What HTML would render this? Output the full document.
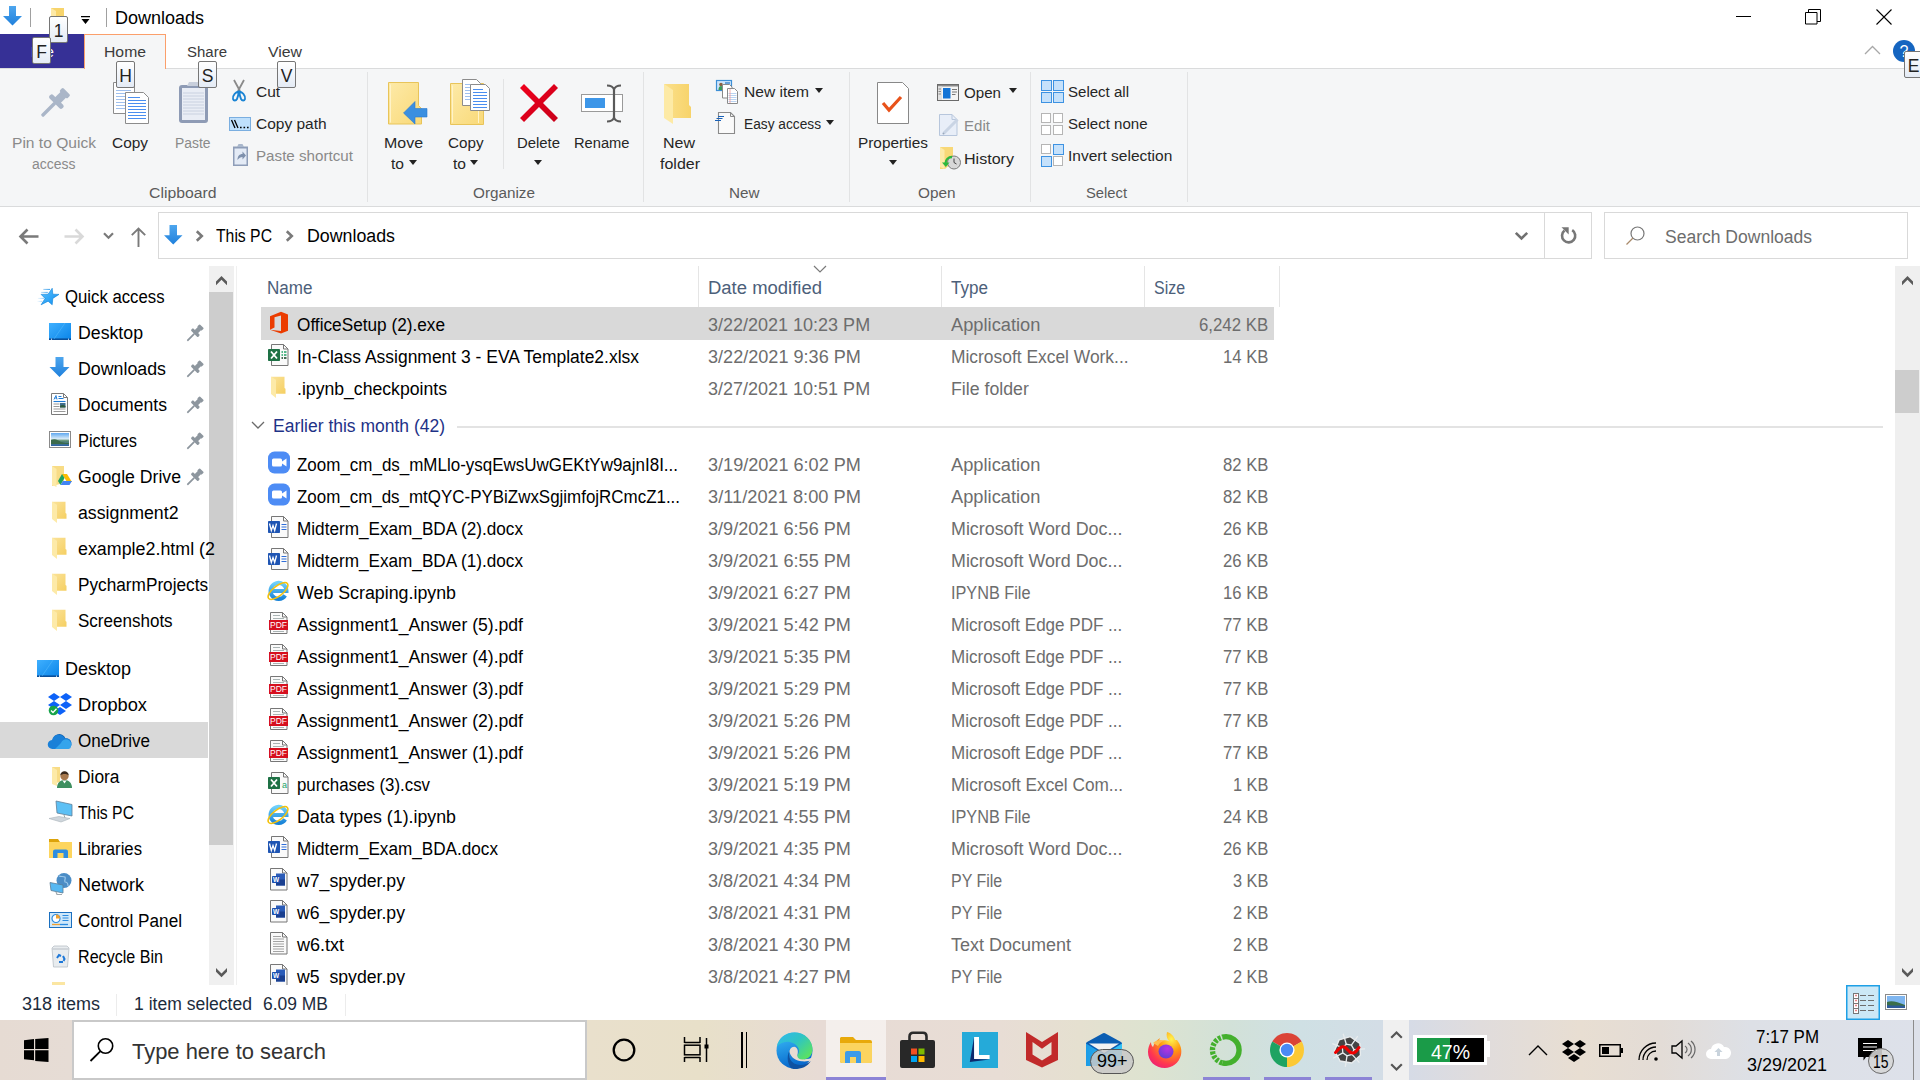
<!DOCTYPE html>
<html><head><meta charset="utf-8"><title>Downloads</title>
<style>
html,body{margin:0;padding:0;width:1920px;height:1080px;overflow:hidden;background:#fff;}
body{position:relative;font-family:"Liberation Sans",sans-serif;}
.t{position:absolute;white-space:nowrap;transform-origin:0 0;}
.r{position:absolute;}
svg.r{overflow:visible}
</style></head><body>
<div class="r" style="left:0px;top:0px;width:1920px;height:34px;background:#fff;"></div>
<svg class="r" style="left:3px;top:6px" width="19" height="20" viewBox="0 0 19 20"><defs><linearGradient id="dlc" x1="0" y1="0" x2="0" y2="1"><stop offset="0" stop-color="#4ea6ee"/><stop offset="1" stop-color="#1f80dc"/></linearGradient></defs><path d="M6 0h7v10h6l-9.5 9.5L0 10h6z" fill="url(#dlc)"/></svg>
<div class="r" style="left:30px;top:8px;width:1px;height:19px;background:#a0a0a0;"></div>
<svg class="r" style="left:51px;top:8px" width="14" height="12" viewBox="0 0 14 12"><path d="M0 0h13v12H0z" fill="#f7d46c"/><path d="M0 0l5 3v9H0z" fill="#fde9a6"/></svg>
<svg class="r" style="left:81px;top:16px" width="10" height="9" viewBox="0 0 10 9"><path d="M0 0h9v1.3H0z M0.5 3h8L4.5 8z" fill="#000"/></svg>
<div class="r" style="left:106px;top:8px;width:1px;height:19px;background:#a0a0a0;"></div>
<div class="t " style="left:115px;top:8.76px;font-size:18px;line-height:18px;color:#000;">Downloads</div>
<div class="r" style="left:1736px;top:16px;width:15px;height:1px;background:#000;"></div>
<svg class="r" style="left:1805px;top:9px" width="16" height="16" viewBox="0 0 16 16"><path d="M0.5 3.5h11.5v11.5H0.5z M3.5 3.5V0.5h12v12h-3.5" fill="none" stroke="#000" stroke-width="1"/></svg>
<svg class="r" style="left:1876px;top:9px" width="16" height="16" viewBox="0 0 16 16"><path d="M0.5 0.5L15.5 15.5M15.5 0.5L0.5 15.5" stroke="#000" stroke-width="1.1"/></svg>
<div class="r" style="left:0px;top:34px;width:84px;height:34px;background:#363096;"></div>
<div class="t " style="left:31px;top:43.88px;font-size:15.5px;line-height:15.5px;color:#fff;transform:scaleX(0.9148);">File</div>
<div class="r" style="left:84px;top:34px;width:82px;height:35px;background:#f5f6f7;border:1px solid #fb9f6b;border-bottom:none;box-sizing:border-box;"></div>
<div class="t " style="left:104px;top:43.88px;font-size:15.5px;line-height:15.5px;color:#3b3b3b;transform:scaleX(1.0158);">Home</div>
<div class="t " style="left:187px;top:43.88px;font-size:15.5px;line-height:15.5px;color:#3b3b3b;transform:scaleX(0.9671);">Share</div>
<div class="t " style="left:268px;top:43.88px;font-size:15.5px;line-height:15.5px;color:#3b3b3b;transform:scaleX(1.0205);">View</div>
<div class="r" style="left:166px;top:68px;width:1754px;height:1px;background:#dadbdc;"></div>
<div class="r" style="left:0px;top:68px;width:84px;height:1px;background:#dadbdc;"></div>
<svg class="r" style="left:1864px;top:45px" width="17" height="10" viewBox="0 0 17 10"><path d="M1 9l7.5-7.5L16 9" fill="none" stroke="#a8a8a8" stroke-width="1.3"/></svg>
<svg class="r" style="left:1893px;top:40px" width="22" height="22" viewBox="0 0 22 22"><circle cx="11" cy="11" r="11" fill="#1565c0"/><text x="11" y="17" font-family="Liberation Sans" font-size="16" fill="#fff" text-anchor="middle">?</text></svg>
<div class="r" style="left:0px;top:69px;width:1920px;height:137px;background:#f5f6f7;"></div>
<div class="r" style="left:0px;top:206px;width:1920px;height:1px;background:#dadbdc;"></div>
<div class="r" style="left:367px;top:72px;width:1px;height:130px;background:#e2e3e4;"></div>
<div class="r" style="left:643px;top:72px;width:1px;height:130px;background:#e2e3e4;"></div>
<div class="r" style="left:849px;top:72px;width:1px;height:130px;background:#e2e3e4;"></div>
<div class="r" style="left:1030px;top:72px;width:1px;height:130px;background:#e2e3e4;"></div>
<div class="r" style="left:1187px;top:72px;width:1px;height:130px;background:#e2e3e4;"></div>
<div class="r" style="left:503px;top:79px;width:1px;height:90px;background:#e2e3e4;"></div>
<svg class="r" style="left:39px;top:88px" width="31" height="31" viewBox="0 0 31 31"><g transform="translate(25.5 5.5) rotate(45)"><rect x="-5.5" y="-3" width="11" height="5" rx="1.5" fill="#aab6c8"/><rect x="-4" y="1" width="8" height="9" fill="#aab6c8"/><rect x="-9" y="9" width="18" height="5" rx="2" fill="#aab6c8"/><rect x="-1.7" y="13" width="3.4" height="19" rx="1.2" fill="#aab6c8"/></g></svg>
<div class="t " style="left:12px;top:134.88px;font-size:15.5px;line-height:15.5px;color:#8a8a8a;transform:scaleX(1.0052);">Pin to Quick</div>
<div class="t " style="left:32px;top:155.88px;font-size:15.5px;line-height:15.5px;color:#8a8a8a;transform:scaleX(0.9017);">access</div>
<svg class="r" style="left:113px;top:82px" width="36" height="42" viewBox="0 0 36 42"><path d="M0.5 0.5h17l4 4v27H0.5z" fill="#fff" stroke="#8c8c8c"/><g stroke="#9fc0ee" stroke-width="1"><path d="M3 8.5h15M3 11.5h15M3 14.5h15M3 17.5h15M3 20.5h15M3 23.5h15M3 26.5h15"/></g><path d="M12.5 10.5h18l5 5v26h-23z" fill="#fff" stroke="#8c8c8c"/><g stroke="#4a8ef0" stroke-width="1"><path d="M15 15.5h12M15 18.5h18M15 21.5h18M15 24.5h18M15 27.5h18M15 30.5h18M15 33.5h18M15 36.5h18"/></g></svg>
<div class="t " style="left:112px;top:134.88px;font-size:15.5px;line-height:15.5px;color:#262626;transform:scaleX(0.9949);">Copy</div>
<svg class="r" style="left:178px;top:81px" width="31" height="43" viewBox="0 0 31 43"><rect x="1" y="4" width="29" height="38" rx="3" fill="#8e9bb5"/><rect x="4" y="7" width="23" height="32" fill="#e9edf5"/><g stroke="#c9d1e0" stroke-width="1"><path d="M5 12h21M5 15h21M5 18h21M5 21h21M5 24h21M5 27h21M5 30h21M5 33h21"/></g><path d="M9 5h13l-2-4h-9z" fill="#c8cfdc"/></svg>
<div class="t " style="left:174.5px;top:134.88px;font-size:15.5px;line-height:15.5px;color:#8a8a8a;transform:scaleX(0.8957);">Paste</div>
<svg class="r" style="left:229px;top:79px" width="20" height="24" viewBox="0 0 20 24"><path d="M5 1l6 11M15 1L9 12" stroke="#8a8a8a" stroke-width="1.8" fill="none"/><path d="M9.5 12.5C7 13 3.5 16 4 20c0.5 2 3 2 4 0 1-2 1.5-5 1.5-7.5zM10.5 12.5c2.5.5 6 3.5 5.5 7.5-.5 2-3 2-4 0-1-2-1.5-5-1.5-7.5z" fill="none" stroke="#1a84d4" stroke-width="1.8"/></svg>
<div class="t " style="left:256px;top:83.88px;font-size:15.5px;line-height:15.5px;color:#262626;">Cut</div>
<svg class="r" style="left:229px;top:117px" width="22" height="14" viewBox="0 0 22 14"><rect x="0.5" y="0.5" width="21" height="13" fill="#bfe0fc" stroke="#7aaee0"/><path d="M2.5 3l3.5 8M5.5 3l3.5 8" stroke="#000" stroke-width="1.3"/><path d="M11 10.5h1.6M14.5 10.5h1.6M18 10.5h1.6" stroke="#000" stroke-width="1.6"/></svg>
<div class="t " style="left:256px;top:115.88px;font-size:15.5px;line-height:15.5px;color:#262626;">Copy path</div>
<svg class="r" style="left:232px;top:143px" width="17" height="24" viewBox="0 0 17 24"><rect x="1" y="3.5" width="15" height="19.5" fill="#8e9db8"/><rect x="2.5" y="5.5" width="12" height="16" fill="#e4ebf6"/><path d="M5 4h7l-1.5-3h-4z" fill="#a9b7cc"/><path d="M5.5 17c0-4 2-6 5-6v-2.5l3.5 4-3.5 4v-2.5c-2 0-3.5 1-5 3z" fill="#7f91ad"/></svg>
<div class="t " style="left:256px;top:147.88px;font-size:15.5px;line-height:15.5px;color:#8a8a8a;transform:scaleX(0.9790);">Paste shortcut</div>
<div class="t " style="left:149px;top:184.88px;font-size:15.5px;line-height:15.5px;color:#5b5b5b;transform:scaleX(1.0174);">Clipboard</div>
<svg class="r" style="left:388px;top:82px" width="40" height="44" viewBox="0 0 40 44"><defs><linearGradient id="fg1" x1="0" y1="0" x2="1" y2="1"><stop offset="0" stop-color="#fdeaa8"/><stop offset="1" stop-color="#f9d978"/></linearGradient></defs><path d="M0.5 0.5h30v23l3 3v15.5h-33z" fill="url(#fg1)" stroke="#e8c45a"/><path d="M2.5 2.5v38" stroke="#fff3c8" stroke-width="1"/><path d="M15.5 31l11.5-11.5v7h12v8.5h-12v7z" fill="#3b8fe0" stroke="#2a7ad0" stroke-width="0.6"/></svg>
<div class="t " style="left:384px;top:134.88px;font-size:15.5px;line-height:15.5px;color:#262626;transform:scaleX(1.0290);">Move</div>
<div class="t " style="left:391px;top:155.88px;font-size:15.5px;line-height:15.5px;color:#262626;transform:scaleX(1.0057);">to</div>
<svg class="r" style="left:409px;top:160px" width="8" height="5" viewBox="0 0 8 5"><path d="M0 0h8L4 5z" fill="#222"/></svg>
<svg class="r" style="left:450px;top:79px" width="41" height="46" viewBox="0 0 41 46"><defs><linearGradient id="fg2" x1="0" y1="0" x2="1" y2="1"><stop offset="0" stop-color="#fdeaa8"/><stop offset="1" stop-color="#f9d978"/></linearGradient></defs><path d="M0.5 4.5h33v41h-33z" fill="url(#fg2)" stroke="#e8c45a"/><path d="M2.5 6.5v37M28.5 30v14" stroke="#fff3c8" stroke-width="1"/><path d="M12.5 0.5h14l4 4v22h-18z" fill="#fff" stroke="#8c8c8c"/><g stroke="#9fc0ee"><path d="M15 5.5h10M15 8.5h13M15 11.5h13M15 14.5h13M15 17.5h13M15 20.5h13"/></g><path d="M20.5 5.5h15l4 4v22h-19z" fill="#fff" stroke="#8c8c8c"/><g stroke="#4a8ef0"><path d="M23 10.5h10M23 13.5h14M23 16.5h14M23 19.5h14M23 22.5h14M23 25.5h14M23 28.5h14"/></g></svg>
<div class="t " style="left:447.5px;top:134.88px;font-size:15.5px;line-height:15.5px;color:#262626;transform:scaleX(0.9811);">Copy</div>
<div class="t " style="left:453px;top:155.88px;font-size:15.5px;line-height:15.5px;color:#262626;transform:scaleX(1.0057);">to</div>
<svg class="r" style="left:470px;top:160px" width="8" height="5" viewBox="0 0 8 5"><path d="M0 0h8L4 5z" fill="#222"/></svg>
<svg class="r" style="left:520px;top:84px" width="38" height="38" viewBox="0 0 38 38"><defs><linearGradient id="dg" x1="0" y1="0" x2="1" y2="1"><stop offset="0" stop-color="#f0001c"/><stop offset="1" stop-color="#c8001a"/></linearGradient></defs><path d="M4 0L19 15 34 0l4 4-15 15 15 15-4 4-15-15L4 38 0 34l15-15L0 4z" fill="url(#dg)"/></svg>
<div class="t " style="left:517px;top:134.88px;font-size:15.5px;line-height:15.5px;color:#262626;transform:scaleX(0.9597);">Delete</div>
<svg class="r" style="left:534px;top:160px" width="8" height="5" viewBox="0 0 8 5"><path d="M0 0h8L4 5z" fill="#222"/></svg>
<svg class="r" style="left:581px;top:84px" width="42" height="39" viewBox="0 0 42 39"><rect x="0.5" y="10.5" width="41" height="17" fill="#fff" stroke="#9a9a9a"/><rect x="4" y="14" width="20" height="10" fill="#3d96e8"/><path d="M26 1.5c3 0 6 1 7 4v28c-1 3-4 4-7 4M40 1.5c-3 0-6 1-7 4v28c1 3 4 4 7 4" fill="none" stroke="#5a5a5a" stroke-width="2.2"/></svg>
<div class="t " style="left:574px;top:134.88px;font-size:15.5px;line-height:15.5px;color:#262626;transform:scaleX(0.9473);">Rename</div>
<div class="t " style="left:472.5px;top:184.88px;font-size:15.5px;line-height:15.5px;color:#5b5b5b;transform:scaleX(0.9858);">Organize</div>
<svg class="r" style="left:663px;top:84px" width="29" height="41" viewBox="0 0 29 41"><defs><linearGradient id="nf" x1="0" y1="0" x2="1" y2="0"><stop offset="0" stop-color="#fbe08c"/><stop offset="1" stop-color="#f7d36a"/></linearGradient></defs><path d="M1 0h25v21l2 2v11H10z" fill="url(#nf)"/><path d="M1 0l9 6v34L1 34z" fill="#fdeaa6"/></svg>
<div class="t " style="left:663px;top:134.88px;font-size:15.5px;line-height:15.5px;color:#262626;transform:scaleX(1.0320);">New</div>
<div class="t " style="left:659.5px;top:155.88px;font-size:15.5px;line-height:15.5px;color:#262626;transform:scaleX(1.0316);">folder</div>
<svg class="r" style="left:715px;top:79px" width="24" height="24" viewBox="0 0 24 24"><rect x="1.5" y="1.5" width="15" height="10" fill="#cfe6fb" stroke="#3d8fd6" stroke-width="1.2"/><circle cx="6" cy="5.5" r="1.8" fill="#8a6040"/><path d="M3.5 11c0-3 1-4 2.5-4s2.5 1 2.5 4z" fill="#3a9a5a"/><path d="M10 4h5" stroke="#1d6fc0" stroke-width="1.2"/><path d="M7.5 5.5h7l2.5 2.5v11h-9.5z" fill="#fff" stroke="#8a8a8a"/><path d="M12.5 9.5h7l3 3v12h-10z" fill="#fff" stroke="#8a8a8a"/><path d="M13.5 14.5h8M13.5 16.5h8M13.5 18.5h8M13.5 20.5h8M13.5 22.5h8" stroke="#a8c8ee" stroke-width="0.8"/><path d="M15 10v14" stroke="#f09a9a" stroke-width="0.8"/></svg>
<div class="t " style="left:744px;top:83.88px;font-size:15.5px;line-height:15.5px;color:#262626;transform:scaleX(1.0063);">New item</div>
<svg class="r" style="left:815px;top:88px" width="8" height="5" viewBox="0 0 8 5"><path d="M0 0h8L4 5z" fill="#222"/></svg>
<svg class="r" style="left:714px;top:111px" width="22" height="24" viewBox="0 0 22 24"><path d="M4.5 1.5h12l4 4v17h-16z" fill="#fafafa" stroke="#8a8a8a" stroke-width="1.1"/><path d="M16.5 1.5v4h4" fill="none" stroke="#8a8a8a"/><path d="M4 5.5h6M2.5 7.5h6M1 9.5h6" stroke="#1a62b8" stroke-width="1.1"/></svg>
<div class="t " style="left:744px;top:115.88px;font-size:15.5px;line-height:15.5px;color:#262626;transform:scaleX(0.8850);">Easy access</div>
<svg class="r" style="left:826px;top:120px" width="8" height="5" viewBox="0 0 8 5"><path d="M0 0h8L4 5z" fill="#222"/></svg>
<div class="t " style="left:729px;top:184.88px;font-size:15.5px;line-height:15.5px;color:#5b5b5b;transform:scaleX(0.9836);">New</div>
<svg class="r" style="left:877px;top:82px" width="33" height="43" viewBox="0 0 33 43"><path d="M0.5 0.5h25l6 6v35h-31z" fill="#fff" stroke="#888"/><path d="M6 21l6 7 12-13" fill="none" stroke="#e8521a" stroke-width="3.2"/></svg>
<div class="t " style="left:857.5px;top:134.88px;font-size:15.5px;line-height:15.5px;color:#262626;transform:scaleX(0.9909);">Properties</div>
<svg class="r" style="left:889px;top:160px" width="8" height="5" viewBox="0 0 8 5"><path d="M0 0h8L4 5z" fill="#222"/></svg>
<svg class="r" style="left:937px;top:84px" width="22" height="17" viewBox="0 0 22 17"><rect x="0.5" y="0.5" width="21" height="16" fill="#f4f4f4" stroke="#6a6a6a"/><rect x="1" y="1" width="20" height="1.5" fill="#8a8a8a"/><rect x="1" y="2.5" width="4" height="13.5" fill="#e2e2e2"/><path d="M1.5 5h2.5M1.5 7.5h2.5M1.5 10h2.5" stroke="#8a8a8a"/><rect x="6" y="4" width="7.5" height="10.5" fill="#1474d6"/><path d="M15 5.5h5M15 8h5M15 10.5h3.5" stroke="#777"/></svg>
<div class="t " style="left:964px;top:84.88px;font-size:15.5px;line-height:15.5px;color:#262626;transform:scaleX(0.9758);">Open</div>
<svg class="r" style="left:1009px;top:88px" width="8" height="5" viewBox="0 0 8 5"><path d="M0 0h8L4 5z" fill="#222"/></svg>
<svg class="r" style="left:939px;top:114px" width="21" height="22" viewBox="0 0 21 22"><path d="M0.5 0.5h12.5l5 5v16h-17.5z" fill="#e8eef8" stroke="#b7c6dc"/><path d="M13 0.5v5h5" fill="none" stroke="#b7c6dc"/><path d="M4.5 19.5l14-14" stroke="#c9d4e4" stroke-width="3"/><path d="M3.8 20.2l1.2-1.2" stroke="#9aa8bc" stroke-width="1.5"/></svg>
<div class="t " style="left:964px;top:117.88px;font-size:15.5px;line-height:15.5px;color:#8a8a8a;transform:scaleX(0.9735);">Edit</div>
<svg class="r" style="left:940px;top:147px" width="21" height="23" viewBox="0 0 21 23"><path d="M0 0h13v15l-8 7H0z" fill="#f8d877"/><path d="M0 0l4.5 3v19L0 20z" fill="#fdeaa8"/><circle cx="14" cy="15.5" r="6.5" fill="#d8d8d8" stroke="#7a7a7a" stroke-width="1"/><path d="M14 11.5v4l2.5 1.5" stroke="#444" stroke-width="1" fill="none"/><path d="M5.5 16.5c0-4 3-6.5 6.5-6.5" fill="none" stroke="#2db83d" stroke-width="2.3"/><path d="M2 15.5h7.5L5.8 20z" fill="#2db83d"/></svg>
<div class="t " style="left:964px;top:150.88px;font-size:15.5px;line-height:15.5px;color:#262626;transform:scaleX(1.0368);">History</div>
<div class="t " style="left:918px;top:184.88px;font-size:15.5px;line-height:15.5px;color:#5b5b5b;transform:scaleX(0.9890);">Open</div>
<svg class="r" style="left:1041px;top:80px" width="23" height="23" viewBox="0 0 23 23"><rect x="0.5" y="0.5" width="10" height="10" fill="#c5e1fb" stroke="#3d92e2"/><rect x="12.5" y="0.5" width="10" height="10" fill="#c5e1fb" stroke="#3d92e2"/><rect x="0.5" y="12.5" width="10" height="10" fill="#c5e1fb" stroke="#3d92e2"/><rect x="12.5" y="12.5" width="10" height="10" fill="#c5e1fb" stroke="#3d92e2"/></svg>
<div class="t " style="left:1068px;top:83.88px;font-size:15.5px;line-height:15.5px;color:#262626;transform:scaleX(0.9699);">Select all</div>
<svg class="r" style="left:1041px;top:113px" width="23" height="23" viewBox="0 0 23 23"><rect x="0.5" y="0.5" width="9" height="9" fill="#fff" stroke="#b5b5b5"/><rect x="12.5" y="0.5" width="9" height="9" fill="#fff" stroke="#b5b5b5"/><rect x="0.5" y="12.5" width="9" height="9" fill="#fff" stroke="#b5b5b5"/><rect x="12.5" y="12.5" width="9" height="9" fill="#fff" stroke="#b5b5b5"/></svg>
<div class="t " style="left:1068px;top:115.88px;font-size:15.5px;line-height:15.5px;color:#262626;transform:scaleX(0.9711);">Select none</div>
<svg class="r" style="left:1041px;top:144px" width="23" height="23" viewBox="0 0 23 23"><rect x="0.5" y="0.5" width="9" height="9" fill="#fff" stroke="#b5b5b5"/><rect x="12.5" y="0.5" width="10" height="10" fill="#c5e1fb" stroke="#3d92e2"/><rect x="0.5" y="12.5" width="10" height="10" fill="#c5e1fb" stroke="#3d92e2"/><rect x="12.5" y="12.5" width="9" height="9" fill="#fff" stroke="#b5b5b5"/></svg>
<div class="t " style="left:1068px;top:147.88px;font-size:15.5px;line-height:15.5px;color:#262626;">Invert selection</div>
<div class="t " style="left:1086px;top:184.88px;font-size:15.5px;line-height:15.5px;color:#5b5b5b;transform:scaleX(0.9517);">Select</div>
<div class="r" style="left:0px;top:207px;width:1920px;height:59px;background:#fff;"></div>
<svg class="r" style="left:18px;top:228px" width="21" height="17" viewBox="0 0 21 17"><path d="M20.5 8.5H2.5M9.5 1.5l-7 7 7 7" fill="none" stroke="#7a7a7a" stroke-width="2.6"/></svg>
<svg class="r" style="left:64px;top:228px" width="21" height="17" viewBox="0 0 21 17"><path d="M0.5 8.5h18M11.5 1.5l7 7-7 7" fill="none" stroke="#d9d9d9" stroke-width="2.6"/></svg>
<svg class="r" style="left:103px;top:232px" width="11" height="8" viewBox="0 0 11 8"><path d="M1 1.2l4.5 4.5 4.5-4.5" fill="none" stroke="#7a7a7a" stroke-width="2.2"/></svg>
<svg class="r" style="left:131px;top:227px" width="16" height="20" viewBox="0 0 16 20"><path d="M7.5 1.5V20M0.8 8.2l6.7-6.7 6.7 6.7" fill="none" stroke="#7a7a7a" stroke-width="1.9"/></svg>
<div class="r" style="left:158px;top:212px;width:1434px;height:47px;background:#fff;border:1px solid #d9d9d9;box-sizing:border-box;"></div>
<div class="r" style="left:1544px;top:212px;width:1px;height:47px;background:#d9d9d9;"></div>
<svg class="r" style="left:164px;top:225px" width="19" height="20" viewBox="0 0 19 20"><defs><linearGradient id="dla" x1="0" y1="0" x2="0" y2="1"><stop offset="0" stop-color="#4ea6ee"/><stop offset="1" stop-color="#1f80dc"/></linearGradient></defs><path d="M5.5 0h7.5v10.3h5.5L9.25 19.5 0 10.3h5.5z" fill="url(#dla)"/></svg>
<svg class="r" style="left:195px;top:230px" width="9" height="12" viewBox="0 0 9 12"><path d="M1.8 1.2l5 4.8-5 4.8" fill="none" stroke="#7a7a7a" stroke-width="2.6"/></svg>
<div class="t " style="left:216px;top:226.76px;font-size:18px;line-height:18px;color:#000;transform:scaleX(0.8748);">This PC</div>
<svg class="r" style="left:285px;top:230px" width="9" height="12" viewBox="0 0 9 12"><path d="M1.8 1.2l5 4.8-5 4.8" fill="none" stroke="#7a7a7a" stroke-width="2.6"/></svg>
<div class="t " style="left:307px;top:226.76px;font-size:18px;line-height:18px;color:#000;transform:scaleX(0.9882);">Downloads</div>
<svg class="r" style="left:1514px;top:231px" width="15" height="10" viewBox="0 0 15 10"><path d="M1.8 1.8l5.7 5.7 5.7-5.7" fill="none" stroke="#707070" stroke-width="2.6"/></svg>
<svg class="r" style="left:1560px;top:226px" width="19" height="19" viewBox="0 0 19 19"><path d="M12.2 4.2A6.6 6.6 0 1 1 4.5 4.6" fill="none" stroke="#777" stroke-width="2.6"/><path d="M1.5 1.2h7.2v7.2z" fill="#777"/></svg>
<div class="r" style="left:1604px;top:212px;width:304px;height:47px;background:#fff;border:1px solid #d9d9d9;box-sizing:border-box;"></div>
<svg class="r" style="left:1626px;top:226px" width="19" height="19" viewBox="0 0 19 19"><circle cx="11.5" cy="7.5" r="6.5" fill="none" stroke="#777" stroke-width="1.2"/><path d="M7 12L0.5 18.5" stroke="#a98a6a" stroke-width="1.3"/></svg>
<div class="t " style="left:1665px;top:227.76px;font-size:18px;line-height:18px;color:#6d6d6d;transform:scaleX(0.9730);">Search Downloads</div>
<div class="r" style="left:0px;top:266px;width:208px;height:719px;background:#fff;"></div>
<div class="r" style="left:209px;top:266px;width:25px;height:719px;background:#f0f0f0;"></div>
<div class="r" style="left:209px;top:292px;width:24px;height:553px;background:#cdcdcd;"></div>
<svg class="r" style="left:216px;top:276px" width="11" height="10" viewBox="0 0 11 10"><path d="M5.5 0L11 5.5V9.2L5.5 3.8 0 9.2V5.5z" fill="#5a5a5a"/></svg>
<svg class="r" style="left:216px;top:968px" width="11" height="10" viewBox="0 0 11 10"><path d="M5.5 9.2L11 3.7V0L5.5 5.4 0 0V3.7z" fill="#5a5a5a"/></svg>
<div class="r" style="left:236px;top:266px;width:1px;height:719px;background:#f0f0f0;"></div>
<div class="r" style="left:0px;top:722px;width:208px;height:36px;background:#d9d9d9;"></div>
<div class="t " style="left:65px;top:287.76px;font-size:18px;line-height:18px;color:#000;transform:scaleX(0.9296);">Quick access</div>
<svg class="r" style="left:36px;top:286px" width="24" height="21" viewBox="0 0 24 21"><defs><linearGradient id="qal" x1="0" y1="0" x2="1" y2="0"><stop offset="0" stop-color="#1a90e8" stop-opacity="0"/><stop offset="1" stop-color="#1a90e8" stop-opacity="0.9"/></linearGradient><linearGradient id="qas" x1="0" y1="0" x2="1" y2="1"><stop offset="0" stop-color="#5cc4ff"/><stop offset="1" stop-color="#0f8ef0"/></linearGradient></defs><path d="M7.3 3.4H14M5.1 6.4h6.7M1.8 12.4h6.4M0.9 15.4h5.1" stroke="url(#qal)" stroke-width="1"/><path d="M16.2 2.25L16.8 8.2 23 8.4 16.8 12.4 16.2 18.8 12.1 15.2 5.1 18.8 9.1 12.4 5.1 8.4 12.1 8.2z" fill="url(#qas)" stroke="#0a7fd8" stroke-width="0.6" stroke-linejoin="round"/></svg>
<div class="t " style="left:78px;top:323.76px;font-size:18px;line-height:18px;color:#000;transform:scaleX(0.9844);">Desktop</div>
<svg class="r" style="left:49px;top:323px" width="22" height="21" viewBox="0 0 22 21"><defs><linearGradient id="dkg" x1="0" y1="0" x2="1" y2="1"><stop offset="0" stop-color="#3fb0ff"/><stop offset="1" stop-color="#0a84e8"/></linearGradient></defs><rect x="0" y="0" width="22" height="17" fill="url(#dkg)"/><path d="M0 16.2h22" stroke="#0a4f9a" stroke-width="1.6"/><path d="M2 16.2h1M19 16.2h1" stroke="#fff" stroke-width="1"/><path d="M16 0L5 16" stroke="#5cc0ff" stroke-width="0.8" opacity="0.6"/></svg>
<svg class="r" style="left:188px;top:324px" width="16" height="16" viewBox="0 0 16 16"><g transform="translate(12 4) rotate(45)" fill="#8d969e"><rect x="-3" y="-2.5" width="6" height="3.5" rx="0.8"/><rect x="-2.2" y="0.5" width="4.4" height="5"/><rect x="-5" y="5" width="10" height="3.2" rx="1"/><rect x="-0.9" y="8" width="1.8" height="10" rx="0.6"/></g></svg>
<div class="t " style="left:78px;top:359.76px;font-size:18px;line-height:18px;color:#000;transform:scaleX(0.9882);">Downloads</div>
<svg class="r" style="left:49px;top:357px" width="22" height="21" viewBox="0 0 22 21"><defs><linearGradient id="dlb" x1="0" y1="0" x2="0" y2="1"><stop offset="0" stop-color="#4ea6ee"/><stop offset="1" stop-color="#1f80dc"/></linearGradient></defs><path d="M6.5 0h8v10h6L10.5 20 0.5 10h6z" fill="url(#dlb)"/></svg>
<svg class="r" style="left:188px;top:360px" width="16" height="16" viewBox="0 0 16 16"><g transform="translate(12 4) rotate(45)" fill="#8d969e"><rect x="-3" y="-2.5" width="6" height="3.5" rx="0.8"/><rect x="-2.2" y="0.5" width="4.4" height="5"/><rect x="-5" y="5" width="10" height="3.2" rx="1"/><rect x="-0.9" y="8" width="1.8" height="10" rx="0.6"/></g></svg>
<div class="t " style="left:78px;top:395.76px;font-size:18px;line-height:18px;color:#000;transform:scaleX(0.9776);">Documents</div>
<svg class="r" style="left:49px;top:393px" width="22" height="21" viewBox="0 0 22 21"><path d="M2.5 0.5h12l4 4v17h-16z" fill="#fff" stroke="#7a7a7a"/><path d="M14.5 0.5v4h4" fill="none" stroke="#7a7a7a"/><path d="M5 6.5l2-4 1 4M5.5 5h2.5" stroke="#1e7ad6" stroke-width="0.9" fill="none"/><path d="M9.5 3.5h3M9.5 5.5h5" stroke="#1e7ad6"/><path d="M4.5 8.5h12" stroke="#1e7ad6" stroke-width="1.1"/><path d="M4.5 11h6M4.5 13.5h6M4.5 16h12M4.5 18.5h12" stroke="#999"/><rect x="11" y="10" width="5.5" height="4.5" fill="#3f6e8e"/><path d="M11 13c2-1.5 3.5-1 5.5 0v1.5H11z" fill="#2e5a3e"/></svg>
<svg class="r" style="left:188px;top:396px" width="16" height="16" viewBox="0 0 16 16"><g transform="translate(12 4) rotate(45)" fill="#8d969e"><rect x="-3" y="-2.5" width="6" height="3.5" rx="0.8"/><rect x="-2.2" y="0.5" width="4.4" height="5"/><rect x="-5" y="5" width="10" height="3.2" rx="1"/><rect x="-0.9" y="8" width="1.8" height="10" rx="0.6"/></g></svg>
<div class="t " style="left:78px;top:431.76px;font-size:18px;line-height:18px;color:#000;transform:scaleX(0.9074);">Pictures</div>
<svg class="r" style="left:49px;top:431px" width="22" height="21" viewBox="0 0 22 21"><defs><linearGradient id="pcg" x1="0" y1="0" x2="0" y2="1"><stop offset="0" stop-color="#5fa8f0"/><stop offset="0.45" stop-color="#d9ecf8"/><stop offset="0.6" stop-color="#5a8a6a"/><stop offset="1" stop-color="#2e62a8"/></linearGradient></defs><rect x="0.5" y="0.5" width="21" height="16" fill="#fff" stroke="#8a8a8a"/><rect x="2" y="2" width="18" height="13" fill="url(#pcg)"/><path d="M2 9c4-2 7 0 10 2 3 1 6 1 8 1v1H2z" fill="#3b6a4a"/></svg>
<svg class="r" style="left:188px;top:432px" width="16" height="16" viewBox="0 0 16 16"><g transform="translate(12 4) rotate(45)" fill="#8d969e"><rect x="-3" y="-2.5" width="6" height="3.5" rx="0.8"/><rect x="-2.2" y="0.5" width="4.4" height="5"/><rect x="-5" y="5" width="10" height="3.2" rx="1"/><rect x="-0.9" y="8" width="1.8" height="10" rx="0.6"/></g></svg>
<div class="t " style="left:78px;top:467.76px;font-size:18px;line-height:18px;color:#000;transform:scaleX(0.9805);">Google Drive</div>
<svg class="r" style="left:52px;top:466px" width="22" height="21" viewBox="0 0 22 21"><path d="M0 0h12v17l-12 3z" fill="#f8dc86"/><path d="M0 0l4.5 3v18L0 19z" fill="#fdeaa8"/><path d="M10 8h5l5 8h-5z" fill="#fbbc04"/><path d="M10 8l2.5 4-4 7L6 15z" fill="#1ea362"/><path d="M8.5 19l2.5-4h9l-2.5 4z" fill="#4285f4"/></svg>
<svg class="r" style="left:188px;top:468px" width="16" height="16" viewBox="0 0 16 16"><g transform="translate(12 4) rotate(45)" fill="#8d969e"><rect x="-3" y="-2.5" width="6" height="3.5" rx="0.8"/><rect x="-2.2" y="0.5" width="4.4" height="5"/><rect x="-5" y="5" width="10" height="3.2" rx="1"/><rect x="-0.9" y="8" width="1.8" height="10" rx="0.6"/></g></svg>
<div class="t " style="left:78px;top:503.76px;font-size:18px;line-height:18px;color:#000;transform:scaleX(0.9849);">assignment2</div>
<svg class="r" style="left:47px;top:500px" width="26" height="24" viewBox="0 0 26 24"><defs><linearGradient id="flg2" x1="0" y1="0" x2="1" y2="1"><stop offset="0" stop-color="#fbe39a"/><stop offset="1" stop-color="#f5cf62"/></linearGradient></defs><path d="M5 1.8h13.5v11.2l1 0.8v4.9H10z" fill="url(#flg2)"/><path d="M5 1.8l5 3v18.2l-5-4z" fill="#fdeaa8"/></svg>
<div class="t " style="left:78px;top:539.76px;font-size:18px;line-height:18px;color:#000;transform:scaleX(0.9922);">example2.html (2</div>
<svg class="r" style="left:47px;top:536px" width="26" height="24" viewBox="0 0 26 24"><defs><linearGradient id="flg2" x1="0" y1="0" x2="1" y2="1"><stop offset="0" stop-color="#fbe39a"/><stop offset="1" stop-color="#f5cf62"/></linearGradient></defs><path d="M5 1.8h13.5v11.2l1 0.8v4.9H10z" fill="url(#flg2)"/><path d="M5 1.8l5 3v18.2l-5-4z" fill="#fdeaa8"/></svg>
<div class="t " style="left:78px;top:575.76px;font-size:18px;line-height:18px;color:#000;transform:scaleX(0.9561);">PycharmProjects</div>
<svg class="r" style="left:47px;top:572px" width="26" height="24" viewBox="0 0 26 24"><defs><linearGradient id="flg2" x1="0" y1="0" x2="1" y2="1"><stop offset="0" stop-color="#fbe39a"/><stop offset="1" stop-color="#f5cf62"/></linearGradient></defs><path d="M5 1.8h13.5v11.2l1 0.8v4.9H10z" fill="url(#flg2)"/><path d="M5 1.8l5 3v18.2l-5-4z" fill="#fdeaa8"/></svg>
<div class="t " style="left:78px;top:611.76px;font-size:18px;line-height:18px;color:#000;transform:scaleX(0.9457);">Screenshots</div>
<svg class="r" style="left:47px;top:608px" width="26" height="24" viewBox="0 0 26 24"><defs><linearGradient id="flg2" x1="0" y1="0" x2="1" y2="1"><stop offset="0" stop-color="#fbe39a"/><stop offset="1" stop-color="#f5cf62"/></linearGradient></defs><path d="M5 1.8h13.5v11.2l1 0.8v4.9H10z" fill="url(#flg2)"/><path d="M5 1.8l5 3v18.2l-5-4z" fill="#fdeaa8"/></svg>
<div class="t " style="left:65px;top:659.76px;font-size:18px;line-height:18px;color:#000;">Desktop</div>
<svg class="r" style="left:37px;top:660px" width="22" height="17" viewBox="0 0 22 17"><defs><linearGradient id="dkg" x1="0" y1="0" x2="1" y2="1"><stop offset="0" stop-color="#3fb0ff"/><stop offset="1" stop-color="#0a84e8"/></linearGradient></defs><rect x="0" y="0" width="22" height="17" fill="url(#dkg)"/><path d="M0 16.2h22" stroke="#0a4f9a" stroke-width="1.6"/><path d="M2 16.2h1M19 16.2h1" stroke="#fff" stroke-width="1"/><path d="M16 0L5 16" stroke="#5cc0ff" stroke-width="0.8" opacity="0.6"/></svg>
<div class="t " style="left:78px;top:695.76px;font-size:18px;line-height:18px;color:#000;transform:scaleX(1.0142);">Dropbox</div>
<div class="t " style="left:78px;top:731.76px;font-size:18px;line-height:18px;color:#000;transform:scaleX(0.9470);">OneDrive</div>
<div class="t " style="left:78px;top:767.76px;font-size:18px;line-height:18px;color:#000;transform:scaleX(0.9648);">Diora</div>
<div class="t " style="left:78px;top:803.76px;font-size:18px;line-height:18px;color:#000;transform:scaleX(0.8748);">This PC</div>
<div class="t " style="left:78px;top:839.76px;font-size:18px;line-height:18px;color:#000;transform:scaleX(0.9271);">Libraries</div>
<div class="t " style="left:78px;top:875.76px;font-size:18px;line-height:18px;color:#000;">Network</div>
<div class="t " style="left:78px;top:911.76px;font-size:18px;line-height:18px;color:#000;transform:scaleX(0.9536);">Control Panel</div>
<div class="t " style="left:78px;top:947.76px;font-size:18px;line-height:18px;color:#000;transform:scaleX(0.8944);">Recycle Bin</div>
<svg class="r" style="left:48px;top:693px" width="24" height="22" viewBox="0 0 24 22"><path d="M6 0l6 4-6 4-6-4zM18 0l6 4-6 4-6-4zM0 12l6-4 6 4-6 4zM24 12l-6-4-6 4 6 4zM6 18l6-4 6 4-6 4z" fill="#0d62f8"/><circle cx="5.5" cy="17.5" r="4.8" fill="#17a34a"/><path d="M3 17.5l2 2 3.5-3.8" fill="none" stroke="#fff" stroke-width="1.3"/></svg>
<svg class="r" style="left:48px;top:732px" width="24" height="17" viewBox="0 0 24 17"><path d="M5 11a6.5 6.5 0 0 1 12.5-4.5A5 5 0 0 1 23 9.5v1" fill="#0e5fb0"/><path d="M4.5 17a4.5 4.5 0 0 1-0.5-9 7 7 0 0 1 13-1.5 5 5 0 0 1 2.5 10.5z" fill="#1a80d8"/><path d="M7 17l6-6a5 5 0 0 1 10 3 3 3 0 0 1-3 3z" fill="#34a4ec"/></svg>
<svg class="r" style="left:51px;top:766px" width="22" height="22" viewBox="0 0 22 22"><path d="M1 1h8v15l-8 2z" fill="#f8dc86"/><path d="M1 1l5 3v16l-5-2z" fill="#fdeaa8"/><path d="M6 22c0-5 3-8 7.5-8S21 17 21 22z" fill="#3e8f60"/><path d="M11.5 14.5l2 3 2-3" fill="#fff"/><circle cx="13.5" cy="10" r="4.2" fill="#a8794e"/><path d="M9.3 9.5a4.2 4.2 0 0 1 8.4 0c-1-2-7-2-8.4 0z" fill="#3a2a1e"/></svg>
<svg class="r" style="left:47px;top:800px" width="26" height="23" viewBox="0 0 26 23"><path d="M9 1l16 3.5v11.5L10 13z" fill="#5cc0f5" stroke="#5f7f98" stroke-width="0.8"/><path d="M17 15l1 3" stroke="#9aa" stroke-width="1"/><path d="M2 18.5l10-2 11 2-9 3.5z" fill="#cfd6dc" stroke="#aab3ba" stroke-width="0.6"/></svg>
<svg class="r" style="left:49px;top:839px" width="23" height="19" viewBox="0 0 23 19"><path d="M0 0h9l2 3H0z" fill="#dca30a"/><path d="M0 3h23v16H0z" fill="#fdd55e"/><path d="M4 19v-6.5a2 2 0 0 1 2-2h11a2 2 0 0 1 2 2V19h-4.5v-5h-6v5z" fill="#2e8de0"/></svg>
<svg class="r" style="left:49px;top:872px" width="24" height="23" viewBox="0 0 24 23"><circle cx="15" cy="8.5" r="7.5" fill="#4b8dc6"/><path d="M10 4c2 1 4 0 6 1 1 2-1 3 0 5 2 0 3 2 3 4" fill="none" stroke="#9cc8ea" stroke-width="1.2"/><path d="M1 10.5l13 2.5v8L2 18.5z" fill="#56b8f2" stroke="#5a7c96" stroke-width="0.8"/><path d="M7 20l1 2.5h5" stroke="#a0a8ae" stroke-width="1.2" fill="none"/></svg>
<svg class="r" style="left:49px;top:912px" width="23" height="16" viewBox="0 0 23 16"><rect x="0.5" y="0.5" width="22" height="15" fill="#cfe8fa" stroke="#1a6fc0"/><circle cx="7" cy="6.5" r="4" fill="#fff" stroke="#2a8ae0" stroke-width="1.2"/><path d="M7 6.5V2.5A4 4 0 0 1 11 6.5z" fill="#f0a030"/><path d="M13.5 3.5h6M13.5 6h6M13.5 8.5h6" stroke="#2a8ae0" stroke-width="1"/><path d="M3 12.5h8" stroke="#f0a030" stroke-width="1.3"/><path d="M11 12.5h8" stroke="#2a8ae0" stroke-width="1.3"/></svg>
<svg class="r" style="left:50px;top:945px" width="21" height="23" viewBox="0 0 21 23"><path d="M2 3l2-2h13l2 2-1.5 19H3.5z" fill="#e8ecef" stroke="#b8bfc5" stroke-width="0.8"/><path d="M2 4h17" stroke="#c8ced3" stroke-width="1.5"/><path d="M7 13l2-3 2 1M13 11l1.5 3-1 2M9 17h4" fill="none" stroke="#1e78d8" stroke-width="2"/></svg>
<svg class="r" style="left:52px;top:982px" width="14" height="4" viewBox="0 0 14 4"><rect width="13" height="4" fill="#fbe6a2"/></svg>
<div class="r" style="left:237px;top:266px;width:1658px;height:719px;background:#fff;"></div>
<div class="t " style="left:267px;top:278.76px;font-size:18px;line-height:18px;color:#4c607a;transform:scaleX(0.9476);">Name</div>
<div class="t " style="left:708px;top:278.76px;font-size:18px;line-height:18px;color:#4c607a;transform:scaleX(1.0265);">Date modified</div>
<div class="t " style="left:951px;top:278.76px;font-size:18px;line-height:18px;color:#4c607a;transform:scaleX(0.9481);">Type</div>
<div class="t " style="left:1154px;top:278.76px;font-size:18px;line-height:18px;color:#4c607a;transform:scaleX(0.8853);">Size</div>
<div class="r" style="left:698px;top:266px;width:1px;height:41px;background:#e5e5e5;"></div>
<div class="r" style="left:941px;top:266px;width:1px;height:41px;background:#e5e5e5;"></div>
<div class="r" style="left:1144px;top:266px;width:1px;height:41px;background:#e5e5e5;"></div>
<div class="r" style="left:1279px;top:266px;width:1px;height:41px;background:#e5e5e5;"></div>
<svg class="r" style="left:813px;top:265px" width="14" height="8" viewBox="0 0 14 8"><path d="M1 1l6 6 6-6" fill="none" stroke="#7a7a7a" stroke-width="1.2"/></svg>
<div class="r" style="left:261px;top:307px;width:1013px;height:33px;background:#d9d9d9;"></div>
<div class="t " style="left:297px;top:315.76px;font-size:18px;line-height:18px;color:#000;transform:scaleX(0.9564);">OfficeSetup (2).exe</div>
<svg class="r" style="left:266px;top:311px" width="26" height="24" viewBox="0 0 26 24"><path d="M15 0.8l7 2.7v16.3l-7 2.7-11-3.7 11 1.2V4.6L8.5 6.3v10.2L4 18.8V5.2z" fill="#eb3c00"/></svg>
<div class="t " style="left:708px;top:315.76px;font-size:18px;line-height:18px;color:#6d6d6d;">3/22/2021 10:23 PM</div>
<div class="t " style="left:951px;top:315.76px;font-size:18px;line-height:18px;color:#6d6d6d;transform:scaleX(1.0151);">Application</div>
<div class="t " style="left:1198.87622px;top:315.76px;font-size:18px;line-height:18px;color:#6d6d6d;transform:scaleX(0.9334);">6,242 KB</div>
<div class="t " style="left:297px;top:347.76px;font-size:18px;line-height:18px;color:#000;transform:scaleX(0.9702);">In-Class Assignment 3 - EVA Template2.xlsx</div>
<svg class="r" style="left:266px;top:343px" width="26" height="24" viewBox="0 0 26 24"><path d="M5.5 1.5h12l4.5 4.5v16.5h-16.5z" fill="#fafafa" stroke="#777"/><path d="M17.5 1.5v4.5h4.5" fill="none" stroke="#777"/><rect x="2" y="6" width="12" height="12" rx="0.8" fill="#1e7145"/><path d="M5 8.5l6 7M11 8.5l-6 7" stroke="#fff" stroke-width="1.8"/><path d="M15.5 9h1.5M18 9h2.5M15.5 12h1.5M18 12h2.5" stroke="#21a366" stroke-width="1.6"/><path d="M15.5 15h1.5M18 15h2.5" stroke="#0d3d20" stroke-width="1.6"/></svg>
<div class="t " style="left:708px;top:347.76px;font-size:18px;line-height:18px;color:#6d6d6d;transform:scaleX(1.0050);">3/22/2021 9:36 PM</div>
<div class="t " style="left:951px;top:347.76px;font-size:18px;line-height:18px;color:#6d6d6d;transform:scaleX(0.9666);">Microsoft Excel Work...</div>
<div class="t " style="left:1222.63028px;top:347.76px;font-size:18px;line-height:18px;color:#6d6d6d;transform:scaleX(0.9253);">14 KB</div>
<div class="t " style="left:297px;top:379.76px;font-size:18px;line-height:18px;color:#000;transform:scaleX(0.9798);">.ipynb_checkpoints</div>
<svg class="r" style="left:266px;top:375px" width="26" height="24" viewBox="0 0 26 24"><defs><linearGradient id="flg" x1="0" y1="0" x2="1" y2="1"><stop offset="0" stop-color="#fbe39a"/><stop offset="1" stop-color="#f5cf62"/></linearGradient></defs><path d="M5 1.8h13.5v11.2l1 0.8v4.9H10z" fill="url(#flg)"/><path d="M5 1.8l5 3v18.2l-5-4z" fill="#fdeaa8"/></svg>
<div class="t " style="left:708px;top:379.76px;font-size:18px;line-height:18px;color:#6d6d6d;">3/27/2021 10:51 PM</div>
<div class="t " style="left:951px;top:379.76px;font-size:18px;line-height:18px;color:#6d6d6d;transform:scaleX(0.9844);">File folder</div>
<div class="t " style="left:297px;top:455.76px;font-size:18px;line-height:18px;color:#000;transform:scaleX(0.9428);">Zoom_cm_ds_mMLlo-ysqEwsUwGEKtYw9ajnI8I...</div>
<svg class="r" style="left:266px;top:451px" width="26" height="24" viewBox="0 0 26 24"><rect x="2" y="0.5" width="22" height="22" rx="6.5" fill="#4d8cf5"/><rect x="6" y="7.5" width="10" height="8" rx="1.5" fill="#fff"/><path d="M16 10.5l4.5-3v8l-4.5-3z" fill="#fff"/></svg>
<div class="t " style="left:708px;top:455.76px;font-size:18px;line-height:18px;color:#6d6d6d;transform:scaleX(1.0050);">3/19/2021 6:02 PM</div>
<div class="t " style="left:951px;top:455.76px;font-size:18px;line-height:18px;color:#6d6d6d;transform:scaleX(1.0151);">Application</div>
<div class="t " style="left:1222.63028px;top:455.76px;font-size:18px;line-height:18px;color:#6d6d6d;transform:scaleX(0.9253);">82 KB</div>
<div class="t " style="left:297px;top:487.76px;font-size:18px;line-height:18px;color:#000;transform:scaleX(0.9409);">Zoom_cm_ds_mtQYC-PYBiZwxSgjimfojRCmcZ1...</div>
<svg class="r" style="left:266px;top:483px" width="26" height="24" viewBox="0 0 26 24"><rect x="2" y="0.5" width="22" height="22" rx="6.5" fill="#4d8cf5"/><rect x="6" y="7.5" width="10" height="8" rx="1.5" fill="#fff"/><path d="M16 10.5l4.5-3v8l-4.5-3z" fill="#fff"/></svg>
<div class="t " style="left:708px;top:487.76px;font-size:18px;line-height:18px;color:#6d6d6d;transform:scaleX(1.0139);">3/11/2021 8:00 PM</div>
<div class="t " style="left:951px;top:487.76px;font-size:18px;line-height:18px;color:#6d6d6d;transform:scaleX(1.0151);">Application</div>
<div class="t " style="left:1222.63028px;top:487.76px;font-size:18px;line-height:18px;color:#6d6d6d;transform:scaleX(0.9253);">82 KB</div>
<div class="t " style="left:297px;top:519.76px;font-size:18px;line-height:18px;color:#000;transform:scaleX(0.9533);">Midterm_Exam_BDA (2).docx</div>
<svg class="r" style="left:266px;top:515px" width="26" height="24" viewBox="0 0 26 24"><path d="M5.5 1.5h12l4.5 4.5v16.5h-16.5z" fill="#fafafa" stroke="#777"/><path d="M17.5 1.5v4.5h4.5" fill="none" stroke="#777"/><rect x="2" y="6" width="12" height="12" rx="0.8" fill="#1f55b3"/><path d="M3.5 8.5l1.8 7 1.7-5 1.7 5 1.8-7" fill="none" stroke="#fff" stroke-width="1.3"/><path d="M15.5 9.5h5M15.5 12h5M15.5 14.5h5" stroke="#2f6ed8" stroke-width="1"/></svg>
<div class="t " style="left:708px;top:519.76px;font-size:18px;line-height:18px;color:#6d6d6d;transform:scaleX(1.0057);">3/9/2021 6:56 PM</div>
<div class="t " style="left:951px;top:519.76px;font-size:18px;line-height:18px;color:#6d6d6d;transform:scaleX(0.9921);">Microsoft Word Doc...</div>
<div class="t " style="left:1222.63028px;top:519.76px;font-size:18px;line-height:18px;color:#6d6d6d;transform:scaleX(0.9253);">26 KB</div>
<div class="t " style="left:297px;top:551.76px;font-size:18px;line-height:18px;color:#000;transform:scaleX(0.9533);">Midterm_Exam_BDA (1).docx</div>
<svg class="r" style="left:266px;top:547px" width="26" height="24" viewBox="0 0 26 24"><path d="M5.5 1.5h12l4.5 4.5v16.5h-16.5z" fill="#fafafa" stroke="#777"/><path d="M17.5 1.5v4.5h4.5" fill="none" stroke="#777"/><rect x="2" y="6" width="12" height="12" rx="0.8" fill="#1f55b3"/><path d="M3.5 8.5l1.8 7 1.7-5 1.7 5 1.8-7" fill="none" stroke="#fff" stroke-width="1.3"/><path d="M15.5 9.5h5M15.5 12h5M15.5 14.5h5" stroke="#2f6ed8" stroke-width="1"/></svg>
<div class="t " style="left:708px;top:551.76px;font-size:18px;line-height:18px;color:#6d6d6d;transform:scaleX(1.0057);">3/9/2021 6:55 PM</div>
<div class="t " style="left:951px;top:551.76px;font-size:18px;line-height:18px;color:#6d6d6d;transform:scaleX(0.9921);">Microsoft Word Doc...</div>
<div class="t " style="left:1222.63028px;top:551.76px;font-size:18px;line-height:18px;color:#6d6d6d;transform:scaleX(0.9253);">26 KB</div>
<div class="t " style="left:297px;top:583.76px;font-size:18px;line-height:18px;color:#000;transform:scaleX(0.9890);">Web Scraping.ipynb</div>
<svg class="r" style="left:266px;top:579px" width="26" height="24" viewBox="0 0 26 24"><defs><linearGradient id="ieg" x1="0" y1="0" x2="0" y2="1"><stop offset="0" stop-color="#6fd0fb"/><stop offset="1" stop-color="#1a84d8"/></linearGradient></defs><path d="M19.2 16.3A8 8 0 1 1 20.5 12H6" fill="none" stroke="url(#ieg)" stroke-width="4"/><ellipse cx="12" cy="12" rx="12" ry="5" transform="rotate(-38 12 12)" fill="none" stroke="#f4c20d" stroke-width="1.5"/></svg>
<div class="t " style="left:708px;top:583.76px;font-size:18px;line-height:18px;color:#6d6d6d;transform:scaleX(1.0057);">3/9/2021 6:27 PM</div>
<div class="t " style="left:951px;top:583.76px;font-size:18px;line-height:18px;color:#6d6d6d;transform:scaleX(0.9033);">IPYNB File</div>
<div class="t " style="left:1222.63028px;top:583.76px;font-size:18px;line-height:18px;color:#6d6d6d;transform:scaleX(0.9253);">16 KB</div>
<div class="t " style="left:297px;top:615.76px;font-size:18px;line-height:18px;color:#000;transform:scaleX(0.9779);">Assignment1_Answer (5).pdf</div>
<svg class="r" style="left:266px;top:611px" width="26" height="24" viewBox="0 0 26 24"><path d="M4.5 1.5h12l4.5 4.5v16.5h-16.5z" fill="#fafafa" stroke="#777"/><path d="M16.5 1.5v4.5h4.5" fill="none" stroke="#777"/><path d="M7 4.5h7M7 7.5h11M7 20.5h11" stroke="#aab4b4"/><rect x="3" y="9" width="19" height="10" fill="#d60f1f"/><text x="12.5" y="17" font-family="Liberation Sans" font-size="8.5" fill="#fff" text-anchor="middle">PDF</text></svg>
<div class="t " style="left:708px;top:615.76px;font-size:18px;line-height:18px;color:#6d6d6d;transform:scaleX(1.0057);">3/9/2021 5:42 PM</div>
<div class="t " style="left:951px;top:615.76px;font-size:18px;line-height:18px;color:#6d6d6d;transform:scaleX(0.9459);">Microsoft Edge PDF ...</div>
<div class="t " style="left:1222.63028px;top:615.76px;font-size:18px;line-height:18px;color:#6d6d6d;transform:scaleX(0.9253);">77 KB</div>
<div class="t " style="left:297px;top:647.76px;font-size:18px;line-height:18px;color:#000;transform:scaleX(0.9779);">Assignment1_Answer (4).pdf</div>
<svg class="r" style="left:266px;top:643px" width="26" height="24" viewBox="0 0 26 24"><path d="M4.5 1.5h12l4.5 4.5v16.5h-16.5z" fill="#fafafa" stroke="#777"/><path d="M16.5 1.5v4.5h4.5" fill="none" stroke="#777"/><path d="M7 4.5h7M7 7.5h11M7 20.5h11" stroke="#aab4b4"/><rect x="3" y="9" width="19" height="10" fill="#d60f1f"/><text x="12.5" y="17" font-family="Liberation Sans" font-size="8.5" fill="#fff" text-anchor="middle">PDF</text></svg>
<div class="t " style="left:708px;top:647.76px;font-size:18px;line-height:18px;color:#6d6d6d;transform:scaleX(1.0057);">3/9/2021 5:35 PM</div>
<div class="t " style="left:951px;top:647.76px;font-size:18px;line-height:18px;color:#6d6d6d;transform:scaleX(0.9459);">Microsoft Edge PDF ...</div>
<div class="t " style="left:1222.63028px;top:647.76px;font-size:18px;line-height:18px;color:#6d6d6d;transform:scaleX(0.9253);">77 KB</div>
<div class="t " style="left:297px;top:679.76px;font-size:18px;line-height:18px;color:#000;transform:scaleX(0.9779);">Assignment1_Answer (3).pdf</div>
<svg class="r" style="left:266px;top:675px" width="26" height="24" viewBox="0 0 26 24"><path d="M4.5 1.5h12l4.5 4.5v16.5h-16.5z" fill="#fafafa" stroke="#777"/><path d="M16.5 1.5v4.5h4.5" fill="none" stroke="#777"/><path d="M7 4.5h7M7 7.5h11M7 20.5h11" stroke="#aab4b4"/><rect x="3" y="9" width="19" height="10" fill="#d60f1f"/><text x="12.5" y="17" font-family="Liberation Sans" font-size="8.5" fill="#fff" text-anchor="middle">PDF</text></svg>
<div class="t " style="left:708px;top:679.76px;font-size:18px;line-height:18px;color:#6d6d6d;transform:scaleX(1.0057);">3/9/2021 5:29 PM</div>
<div class="t " style="left:951px;top:679.76px;font-size:18px;line-height:18px;color:#6d6d6d;transform:scaleX(0.9459);">Microsoft Edge PDF ...</div>
<div class="t " style="left:1222.63028px;top:679.76px;font-size:18px;line-height:18px;color:#6d6d6d;transform:scaleX(0.9253);">77 KB</div>
<div class="t " style="left:297px;top:711.76px;font-size:18px;line-height:18px;color:#000;transform:scaleX(0.9779);">Assignment1_Answer (2).pdf</div>
<svg class="r" style="left:266px;top:707px" width="26" height="24" viewBox="0 0 26 24"><path d="M4.5 1.5h12l4.5 4.5v16.5h-16.5z" fill="#fafafa" stroke="#777"/><path d="M16.5 1.5v4.5h4.5" fill="none" stroke="#777"/><path d="M7 4.5h7M7 7.5h11M7 20.5h11" stroke="#aab4b4"/><rect x="3" y="9" width="19" height="10" fill="#d60f1f"/><text x="12.5" y="17" font-family="Liberation Sans" font-size="8.5" fill="#fff" text-anchor="middle">PDF</text></svg>
<div class="t " style="left:708px;top:711.76px;font-size:18px;line-height:18px;color:#6d6d6d;transform:scaleX(1.0057);">3/9/2021 5:26 PM</div>
<div class="t " style="left:951px;top:711.76px;font-size:18px;line-height:18px;color:#6d6d6d;transform:scaleX(0.9459);">Microsoft Edge PDF ...</div>
<div class="t " style="left:1222.63028px;top:711.76px;font-size:18px;line-height:18px;color:#6d6d6d;transform:scaleX(0.9253);">77 KB</div>
<div class="t " style="left:297px;top:743.76px;font-size:18px;line-height:18px;color:#000;transform:scaleX(0.9779);">Assignment1_Answer (1).pdf</div>
<svg class="r" style="left:266px;top:739px" width="26" height="24" viewBox="0 0 26 24"><path d="M4.5 1.5h12l4.5 4.5v16.5h-16.5z" fill="#fafafa" stroke="#777"/><path d="M16.5 1.5v4.5h4.5" fill="none" stroke="#777"/><path d="M7 4.5h7M7 7.5h11M7 20.5h11" stroke="#aab4b4"/><rect x="3" y="9" width="19" height="10" fill="#d60f1f"/><text x="12.5" y="17" font-family="Liberation Sans" font-size="8.5" fill="#fff" text-anchor="middle">PDF</text></svg>
<div class="t " style="left:708px;top:743.76px;font-size:18px;line-height:18px;color:#6d6d6d;transform:scaleX(1.0057);">3/9/2021 5:26 PM</div>
<div class="t " style="left:951px;top:743.76px;font-size:18px;line-height:18px;color:#6d6d6d;transform:scaleX(0.9459);">Microsoft Edge PDF ...</div>
<div class="t " style="left:1222.63028px;top:743.76px;font-size:18px;line-height:18px;color:#6d6d6d;transform:scaleX(0.9253);">77 KB</div>
<div class="t " style="left:297px;top:775.76px;font-size:18px;line-height:18px;color:#000;transform:scaleX(0.9363);">purchases (3).csv</div>
<svg class="r" style="left:266px;top:771px" width="26" height="24" viewBox="0 0 26 24"><path d="M5.5 1.5h12l4.5 4.5v16.5h-16.5z" fill="#fafafa" stroke="#777"/><path d="M17.5 1.5v4.5h4.5" fill="none" stroke="#777"/><rect x="2" y="6" width="12" height="12" rx="0.8" fill="#1e7145"/><path d="M5 8.5l6 7M11 8.5l-6 7" stroke="#fff" stroke-width="1.8"/><text x="18.5" y="17" font-family="Liberation Sans" font-size="9" fill="#21a366" text-anchor="middle">a</text></svg>
<div class="t " style="left:708px;top:775.76px;font-size:18px;line-height:18px;color:#6d6d6d;transform:scaleX(1.0057);">3/9/2021 5:19 PM</div>
<div class="t " style="left:951px;top:775.76px;font-size:18px;line-height:18px;color:#6d6d6d;transform:scaleX(0.9562);">Microsoft Excel Com...</div>
<div class="t " style="left:1232.59166px;top:775.76px;font-size:18px;line-height:18px;color:#6d6d6d;transform:scaleX(0.9074);">1 KB</div>
<div class="t " style="left:297px;top:807.76px;font-size:18px;line-height:18px;color:#000;transform:scaleX(0.9871);">Data types (1).ipynb</div>
<svg class="r" style="left:266px;top:803px" width="26" height="24" viewBox="0 0 26 24"><defs><linearGradient id="ieg" x1="0" y1="0" x2="0" y2="1"><stop offset="0" stop-color="#6fd0fb"/><stop offset="1" stop-color="#1a84d8"/></linearGradient></defs><path d="M19.2 16.3A8 8 0 1 1 20.5 12H6" fill="none" stroke="url(#ieg)" stroke-width="4"/><ellipse cx="12" cy="12" rx="12" ry="5" transform="rotate(-38 12 12)" fill="none" stroke="#f4c20d" stroke-width="1.5"/></svg>
<div class="t " style="left:708px;top:807.76px;font-size:18px;line-height:18px;color:#6d6d6d;transform:scaleX(1.0057);">3/9/2021 4:55 PM</div>
<div class="t " style="left:951px;top:807.76px;font-size:18px;line-height:18px;color:#6d6d6d;transform:scaleX(0.9033);">IPYNB File</div>
<div class="t " style="left:1222.63028px;top:807.76px;font-size:18px;line-height:18px;color:#6d6d6d;transform:scaleX(0.9253);">24 KB</div>
<div class="t " style="left:297px;top:839.76px;font-size:18px;line-height:18px;color:#000;transform:scaleX(0.9523);">Midterm_Exam_BDA.docx</div>
<svg class="r" style="left:266px;top:835px" width="26" height="24" viewBox="0 0 26 24"><path d="M5.5 1.5h12l4.5 4.5v16.5h-16.5z" fill="#fafafa" stroke="#777"/><path d="M17.5 1.5v4.5h4.5" fill="none" stroke="#777"/><rect x="2" y="6" width="12" height="12" rx="0.8" fill="#1f55b3"/><path d="M3.5 8.5l1.8 7 1.7-5 1.7 5 1.8-7" fill="none" stroke="#fff" stroke-width="1.3"/><path d="M15.5 9.5h5M15.5 12h5M15.5 14.5h5" stroke="#2f6ed8" stroke-width="1"/></svg>
<div class="t " style="left:708px;top:839.76px;font-size:18px;line-height:18px;color:#6d6d6d;transform:scaleX(1.0057);">3/9/2021 4:35 PM</div>
<div class="t " style="left:951px;top:839.76px;font-size:18px;line-height:18px;color:#6d6d6d;transform:scaleX(0.9921);">Microsoft Word Doc...</div>
<div class="t " style="left:1222.63028px;top:839.76px;font-size:18px;line-height:18px;color:#6d6d6d;transform:scaleX(0.9253);">26 KB</div>
<div class="t " style="left:297px;top:871.76px;font-size:18px;line-height:18px;color:#000;transform:scaleX(0.9812);">w7_spyder.py</div>
<svg class="r" style="left:266px;top:867px" width="26" height="24" viewBox="0 0 26 24"><path d="M4.5 1.5h12l4.5 4.5v17h-16.5z" fill="#fafafa" stroke="#777"/><path d="M16.5 1.5v4.5h4.5" fill="none" stroke="#777"/><rect x="10" y="6.5" width="9" height="12" fill="#2b5cb8"/><rect x="10" y="12.5" width="9" height="6" fill="#1a3f8f"/><rect x="6" y="9" width="8" height="7" rx="0.8" fill="#1d4fb0"/><text x="10" y="15" font-family="Liberation Sans" font-weight="bold" font-size="6.5" fill="#fff" text-anchor="middle">W</text></svg>
<div class="t " style="left:708px;top:871.76px;font-size:18px;line-height:18px;color:#6d6d6d;transform:scaleX(1.0057);">3/8/2021 4:34 PM</div>
<div class="t " style="left:951px;top:871.76px;font-size:18px;line-height:18px;color:#6d6d6d;transform:scaleX(0.8883);">PY File</div>
<div class="t " style="left:1232.59166px;top:871.76px;font-size:18px;line-height:18px;color:#6d6d6d;transform:scaleX(0.9074);">3 KB</div>
<div class="t " style="left:297px;top:903.76px;font-size:18px;line-height:18px;color:#000;transform:scaleX(0.9812);">w6_spyder.py</div>
<svg class="r" style="left:266px;top:899px" width="26" height="24" viewBox="0 0 26 24"><path d="M4.5 1.5h12l4.5 4.5v17h-16.5z" fill="#fafafa" stroke="#777"/><path d="M16.5 1.5v4.5h4.5" fill="none" stroke="#777"/><rect x="10" y="6.5" width="9" height="12" fill="#2b5cb8"/><rect x="10" y="12.5" width="9" height="6" fill="#1a3f8f"/><rect x="6" y="9" width="8" height="7" rx="0.8" fill="#1d4fb0"/><text x="10" y="15" font-family="Liberation Sans" font-weight="bold" font-size="6.5" fill="#fff" text-anchor="middle">W</text></svg>
<div class="t " style="left:708px;top:903.76px;font-size:18px;line-height:18px;color:#6d6d6d;transform:scaleX(1.0057);">3/8/2021 4:31 PM</div>
<div class="t " style="left:951px;top:903.76px;font-size:18px;line-height:18px;color:#6d6d6d;transform:scaleX(0.8883);">PY File</div>
<div class="t " style="left:1232.59166px;top:903.76px;font-size:18px;line-height:18px;color:#6d6d6d;transform:scaleX(0.9074);">2 KB</div>
<div class="t " style="left:297px;top:935.76px;font-size:18px;line-height:18px;color:#000;">w6.txt</div>
<svg class="r" style="left:266px;top:931px" width="26" height="24" viewBox="0 0 26 24"><path d="M4.5 1.5h12l4.5 4.5v17h-16.5z" fill="#fafafa" stroke="#777"/><path d="M16.5 1.5v4.5h4.5" fill="none" stroke="#777"/><path d="M7 5.5h8M7 8h11M7 10.5h11M7 13h11M7 15.5h11M7 18h11M7 20.5h11" stroke="#9a9a9a" stroke-width="0.9"/></svg>
<div class="t " style="left:708px;top:935.76px;font-size:18px;line-height:18px;color:#6d6d6d;transform:scaleX(1.0057);">3/8/2021 4:30 PM</div>
<div class="t " style="left:951px;top:935.76px;font-size:18px;line-height:18px;color:#6d6d6d;">Text Document</div>
<div class="t " style="left:1232.59166px;top:935.76px;font-size:18px;line-height:18px;color:#6d6d6d;transform:scaleX(0.9074);">2 KB</div>
<div class="t " style="left:297px;top:967.76px;font-size:18px;line-height:18px;color:#000;transform:scaleX(0.9812);">w5_spyder.py</div>
<svg class="r" style="left:266px;top:963px" width="26" height="24" viewBox="0 0 26 24"><path d="M4.5 1.5h12l4.5 4.5v17h-16.5z" fill="#fafafa" stroke="#777"/><path d="M16.5 1.5v4.5h4.5" fill="none" stroke="#777"/><rect x="10" y="6.5" width="9" height="12" fill="#2b5cb8"/><rect x="10" y="12.5" width="9" height="6" fill="#1a3f8f"/><rect x="6" y="9" width="8" height="7" rx="0.8" fill="#1d4fb0"/><text x="10" y="15" font-family="Liberation Sans" font-weight="bold" font-size="6.5" fill="#fff" text-anchor="middle">W</text></svg>
<div class="t " style="left:708px;top:967.76px;font-size:18px;line-height:18px;color:#6d6d6d;transform:scaleX(1.0057);">3/8/2021 4:27 PM</div>
<div class="t " style="left:951px;top:967.76px;font-size:18px;line-height:18px;color:#6d6d6d;transform:scaleX(0.8883);">PY File</div>
<div class="t " style="left:1232.59166px;top:967.76px;font-size:18px;line-height:18px;color:#6d6d6d;transform:scaleX(0.9074);">2 KB</div>
<svg class="r" style="left:251px;top:421px" width="14" height="9" viewBox="0 0 14 9"><path d="M1 1l6 6 6-6" fill="none" stroke="#6a6a6a" stroke-width="1.3"/></svg>
<div class="t " style="left:273px;top:416.76px;font-size:18px;line-height:18px;color:#1e3287;transform:scaleX(0.9714);">Earlier this month (42)</div>
<div class="r" style="left:457px;top:426px;width:1426px;height:2px;background:#e3e3e3;"></div>
<div class="r" style="left:1895px;top:266px;width:25px;height:719px;background:#efefef;"></div>
<div class="r" style="left:1895px;top:370px;width:24px;height:43px;background:#cdcdcd;"></div>
<svg class="r" style="left:1902px;top:276px" width="11" height="10" viewBox="0 0 11 10"><path d="M5.5 0L11 5.5V9.2L5.5 3.8 0 9.2V5.5z" fill="#5a5a5a"/></svg>
<svg class="r" style="left:1902px;top:968px" width="11" height="10" viewBox="0 0 11 10"><path d="M5.5 9.2L11 3.7V0L5.5 5.4 0 0V3.7z" fill="#5a5a5a"/></svg>
<div class="r" style="left:0px;top:985px;width:1920px;height:35px;background:#fff;"></div>
<div class="t " style="left:22px;top:994.76px;font-size:18px;line-height:18px;color:#1c2b3c;">318 items</div>
<div class="r" style="left:116px;top:994px;width:1px;height:22px;background:#ececec;"></div>
<div class="t " style="left:134px;top:994.76px;font-size:18px;line-height:18px;color:#1c2b3c;transform:scaleX(0.9747);">1 item selected</div>
<div class="t " style="left:263px;top:994.76px;font-size:18px;line-height:18px;color:#1c2b3c;transform:scaleX(0.9696);">6.09 MB</div>
<div class="r" style="left:345px;top:994px;width:1px;height:22px;background:#ececec;"></div>
<svg class="r" style="left:1846px;top:985px" width="34" height="35" viewBox="0 0 34 35"><rect x="0.75" y="0.75" width="32.5" height="33.5" fill="#cce8f6" stroke="#1ea0e6" stroke-width="1.5"/><g fill="#fff" stroke="#777" stroke-width="1"><rect x="7.5" y="8.5" width="5" height="5"/><rect x="7.5" y="13.5" width="5" height="5"/><rect x="7.5" y="18.5" width="5" height="5"/><rect x="7.5" y="23.5" width="5" height="5"/></g><path d="M14 10.5h6M22 10.5h6M14 15.5h6M22 15.5h6M14 20.5h6M22 20.5h6M14 25.5h6M22 25.5h6" stroke="#6e6e6e" stroke-width="1"/><path d="M9 10.5h2M9 15.5h2M9 20.5h2M9 25.5h2" stroke="#d33" stroke-width="1.5" opacity="0.6"/></svg>
<svg class="r" style="left:1885px;top:994px" width="22" height="16" viewBox="0 0 22 16"><rect x="0.5" y="0.5" width="21" height="15" fill="#fff" stroke="#8a8a8a"/><rect x="2" y="2" width="18" height="12" fill="#7fb6f0"/><path d="M2 8c5-2 10 0 18 3v3H2z" fill="#3b6e4a"/><path d="M2 11c6 1 12 0 18 1v2H2z" fill="#2e5a9a"/></svg>
<div class="r" style="left:0px;top:1020px;width:1920px;height:60px;background:linear-gradient(90deg,#e6dbd3 0px,#e6dcd5 70px,#e9e0cc 590px,#e8e0c9 700px,#e7dbd5 820px,#e8ddd5 1000px,#e5e0d0 1080px,#dde3d0 1150px,#d2e1d8 1230px,#cfe0e4 1300px,#d3dde6 1380px,#d6dbe6 1410px,#e0dcdc 1480px,#e8ded2 1580px,#e3dcd6 1660px,#dde0e6 1750px,#dde1ea 1920px);"></div>
<svg class="r" style="left:24px;top:1038px" width="25" height="24" viewBox="0 0 25 24"><path d="M0 2.2L10 1v10H0zM11.2 0.9L24.5 0v11H11.2zM0 12.2h10v10L0 21.3zM11.2 12.2h13.3V24l-13.3-1z" fill="#000"/></svg>
<div class="r" style="left:72px;top:1020px;width:515px;height:60px;background:#fff;border:2px solid #c9c9c9;box-sizing:border-box;"></div>
<svg class="r" style="left:89px;top:1037px" width="25" height="26" viewBox="0 0 25 26"><circle cx="16.5" cy="9" r="7.2" fill="none" stroke="#000" stroke-width="1.6"/><path d="M11.2 14.3L1.5 24" stroke="#000" stroke-width="1.8"/></svg>
<div class="t " style="left:132px;top:1040.95px;font-size:22.5px;line-height:22.5px;color:#333;transform:scaleX(0.9751);">Type here to search</div>
<svg class="r" style="left:611px;top:1037px" width="26" height="26" viewBox="0 0 26 26"><circle cx="13" cy="13" r="10.3" fill="none" stroke="#000" stroke-width="2.3"/></svg>
<svg class="r" style="left:683px;top:1037px" width="27" height="26" viewBox="0 0 27 26"><g fill="none" stroke="#000" stroke-width="1.5"><path d="M1.5 0v6M17 0v6M1.5 5.5h15.5"/><rect x="1.5" y="8.2" width="15.5" height="9.6"/><path d="M1.5 20.5h15.5M1.5 20v5M17 20v5"/><path d="M23.5 1v24"/></g><rect x="21.5" y="7.5" width="4" height="4" fill="#000"/></svg>
<div class="r" style="left:741px;top:1032px;width:1.6px;height:36px;background:#000;"></div>
<div class="r" style="left:745.5px;top:1032px;width:1.6px;height:36px;background:#000;"></div>
<svg class="r" style="left:775.5px;top:1031.5px" width="37" height="37" viewBox="0 0 37 37"><defs><linearGradient id="eb1" x1="0" y1="0" x2="0.3" y2="1"><stop offset="0" stop-color="#3cc0fa"/><stop offset="1" stop-color="#0868cc"/></linearGradient><linearGradient id="eg1" x1="0" y1="0" x2="1" y2="0.8"><stop offset="0" stop-color="#30b8ee"/><stop offset="0.5" stop-color="#2ec4c4"/><stop offset="1" stop-color="#5ee45a"/></linearGradient></defs><circle cx="18.5" cy="18.5" r="18" fill="url(#eb1)"/><path d="M15 16C11.5 21 12.5 30.5 21 32.5 27 34 31.5 31.5 34.8 29.2 31.5 34.5 25.5 37 18.5 37 17 37 16.5 36.9 15.6 36.6 10.5 31 10.5 22 15 16z" fill="#0f52a2"/><path d="M18.2 14.8A4.6 4.6 0 0 0 13.8 21C15.5 26 20 28.8 26 29.3 30 29.6 33 29 36.3 28.2L37 25.5 33 26.8C30 27.3 27.5 27.2 26 27 23 26.5 21.5 25 21.5 22.5 22.5 19 21.5 15.2 18.2 14.8z" fill="#e7dcd3"/><path d="M0.8 14.5C2.5 6 9.5 0.5 18.5 0.5 28.5 0.5 36.5 8 36.5 17 36.5 23.5 32 27.5 26.5 27.5 23.5 27.5 21.3 26 21.3 23.5 21.3 23 23 21.5 23 19 23 15.5 20 11.5 14 10 8.5 8.8 3.5 11.5 0.8 14.5z" fill="url(#eg1)"/></svg>
<div class="r" style="left:826px;top:1020px;width:60px;height:60px;background:rgba(255,255,255,0.55);"></div>
<div class="r" style="left:826px;top:1077px;width:60px;height:3px;background:#8c84d6;"></div>
<svg class="r" style="left:840px;top:1037px" width="32" height="26" viewBox="0 0 32 26"><path d="M1 0h12l3 3h14a2 2 0 0 1 2 2v19a2 2 0 0 1-2 2H2a2 2 0 0 1-2-2V1z" fill="#e8a90a"/><path d="M0 6h32v18a2 2 0 0 1-2 2H2a2 2 0 0 1-2-2z" fill="#fbd45f"/><path d="M5 26V16a2 2 0 0 1 2-2h12a2 2 0 0 1 2 2v10h-5v-6h-6v6z" fill="#3d9be8"/></svg>
<svg class="r" style="left:900px;top:1032px" width="36" height="37" viewBox="0 0 36 37"><path d="M9.5 9V4.5C9.5 2 11 0.8 13 0.8h10c2 0 3.5 1.2 3.5 3.7V9" fill="none" stroke="#2a2a2a" stroke-width="2.6"/><rect x="0" y="8" width="35" height="28" rx="2" fill="#282828"/><rect x="11" y="16.5" width="6" height="6" fill="#f25022"/><rect x="18.5" y="16.5" width="6" height="6" fill="#7fba00"/><rect x="11" y="24" width="6" height="6" fill="#00a4ef"/><rect x="18.5" y="24" width="6" height="6" fill="#ffb900"/></svg>
<svg class="r" style="left:962px;top:1032px" width="36" height="36" viewBox="0 0 36 36"><rect width="36" height="36" fill="#25aad9"/><path d="M12 5.5L7.8 30 27.6 27.5 12.1 27z" fill="#0c2a6e"/><path d="M12.1 5h4.9v17.9h10.6V27H12.1z" fill="#fff"/></svg>
<svg class="r" style="left:1026px;top:1032px" width="32" height="36" viewBox="0 0 32 36"><path fill-rule="evenodd" d="M0 0L16 10 32 0v28l-16 7.5L0 28z M6.5 10L16 16.75 25.5 10v12.4L16 28.6 6.5 22.4z" fill="#c12a2a"/></svg>
<svg class="r" style="left:1086px;top:1033px" width="36" height="33" viewBox="0 0 36 33"><defs><linearGradient id="mlb" x1="0" y1="0" x2="1" y2="0"><stop offset="0" stop-color="#1c9be6"/><stop offset="1" stop-color="#34c4f6"/></linearGradient></defs><path d="M0 10.5Q0 9.5 1 9L17 0.3Q18 -0.2 19 0.3L35 9Q36 9.5 36 10.5z" fill="#0a5db2"/><path d="M0 10h36v23H0z" fill="#0a5db2"/><path d="M3 10.5h30L18 20z" fill="#f2f2f2"/><path d="M0 10.5L18 21.5 36 10.5V33H0z" fill="url(#mlb)"/></svg>
<svg class="r" style="left:1090px;top:1049px" width="44" height="25" viewBox="0 0 44 25"><rect x="0.5" y="0.5" width="43" height="24" rx="12" fill="rgba(200,200,200,0.85)" stroke="#555"/></svg>
<div class="t " style="left:1096.5px;top:1053.19px;font-size:17.5px;line-height:17.5px;color:#000;transform:scaleX(1.0274);">99+</div>
<svg class="r" style="left:1147px;top:1032px" width="36" height="36" viewBox="0 0 36 36"><defs><radialGradient id="ff1" cx="0.7" cy="0.2" r="1"><stop offset="0" stop-color="#fff44f"/><stop offset="0.35" stop-color="#ff980e"/><stop offset="0.7" stop-color="#ff3750"/><stop offset="1" stop-color="#e31587"/></radialGradient><radialGradient id="ff2" cx="0.6" cy="0.3" r="0.8"><stop offset="0" stop-color="#b833e1"/><stop offset="1" stop-color="#5b3fd6"/></radialGradient></defs><path d="M30 8c4 5 5 10 4 15-2 8-9 13-16 13C8 36 1 29 1 20c0-4 1-7 3-10 0 3 1 4 2 5 1-4 4-7 7-9-1 2-1 3 0 4 3-2 6-2 9-1-2-2-3-5-2-9 4 1 7 4 8 8z" fill="url(#ff1)"/><ellipse cx="19" cy="19.5" rx="7.5" ry="7" fill="url(#ff2)"/><path d="M6 11c3-3 8-4 12-2-3 0-6 2-7 5" fill="#ffbd4f"/></svg>
<svg class="r" style="left:1209px;top:1034px" width="34" height="34" viewBox="0 0 34 34"><path d="M13.36 3.15A13.3 13.3 0 1 1 13.36 28.85" fill="none" stroke="#44b02e" stroke-width="5.4"/><path d="M13.36 28.85A13.3 13.3 0 0 1 13.36 3.15" fill="none" stroke="#44b02e" stroke-width="5.4" stroke-dasharray="3 1.3"/><path d="M12.9 25.2A10 10 0 0 1 12.9 6.8" fill="none" stroke="#d2e1d8" stroke-width="1" stroke-dasharray="1.2 3"/></svg>
<div class="r" style="left:1203px;top:1077px;width:47px;height:3px;background:#8c84d6;"></div>
<svg class="r" style="left:1270px;top:1033px" width="34" height="34" viewBox="0 0 34 34"><path d="M17 17L2.3 8.5A17 17 0 0 1 31.7 8.5z" fill="#db4437"/><path d="M17 17L31.7 8.5A17 17 0 0 1 17 34z" fill="#fcc934"/><path d="M17 17L17 34A17 17 0 0 1 2.3 8.5z" fill="#1ea362"/><circle cx="17" cy="17" r="7.6" fill="#fff"/><circle cx="17" cy="17" r="6.2" fill="#4a8af4"/></svg>
<div class="r" style="left:1264px;top:1077px;width:47px;height:3px;background:#8c84d6;"></div>
<svg class="r" style="left:1331px;top:1033px" width="34" height="34" viewBox="0 0 34 34"><polygon points="19.3,3.7 28.9,10.5 29.4,22.2 20.7,30.0 9.1,28.0 3.5,17.7 8.1,6.9" fill="#444" stroke="#e8ecee" stroke-width="1.4"/><g stroke="#e8ecee" stroke-width="1.3" fill="none"><path d="M20.4 12.1L26.8 3.1M23.0 16.6L34.0 15.9M21.0 21.4L28.4 29.6M16.0 22.9L14.3 33.8M11.8 19.9L2.2 25.3M11.4 14.7L1.3 10.6M15.3 11.2L12.2 0.7"/><polygon points="20.4,12.1 23.0,16.6 21.0,21.4 16.0,22.9 11.8,19.9 11.4,14.7 15.3,11.2"/></g><path d="M4.5 19.5C8 16 10 12.5 13.5 14s4 6 8 6 5-4 6.5-5.5" fill="none" stroke="#e00" stroke-width="3" stroke-linecap="round"/></svg>
<div class="r" style="left:1325px;top:1077px;width:47px;height:3px;background:#8c84d6;"></div>
<div class="r" style="left:1383px;top:1020px;width:26px;height:60px;background:#f0f0f0;"></div>
<svg class="r" style="left:1390px;top:1030px" width="13" height="9" viewBox="0 0 13 9"><path d="M1.2 7.8l5.3-5.3 5.3 5.3" fill="none" stroke="#555" stroke-width="2.2"/></svg>
<svg class="r" style="left:1390px;top:1063px" width="13" height="9" viewBox="0 0 13 9"><path d="M1.2 1.2l5.3 5.3 5.3-5.3" fill="none" stroke="#555" stroke-width="2.2"/></svg>
<div class="r" style="left:1413px;top:1035px;width:74px;height:30px;background:#fff;"></div>
<div class="r" style="left:1417px;top:1038px;width:33px;height:24px;background:#1a9b48;"></div>
<div class="r" style="left:1450px;top:1038px;width:34px;height:24px;background:#000;"></div>
<div class="r" style="left:1487px;top:1041px;width:3px;height:16px;background:#fff;"></div>
<div class="t " style="left:1431px;top:1041.22px;font-size:21px;line-height:21px;color:#fff;transform:scaleX(0.9279);">47%</div>
<svg class="r" style="left:1528px;top:1045px" width="20" height="11" viewBox="0 0 20 11"><path d="M1 10l9-9 9 9" fill="none" stroke="#000" stroke-width="1.4"/></svg>
<svg class="r" style="left:1562px;top:1040px" width="24" height="21" viewBox="0 0 24 21"><path d="M6 0l6 4-6 4-6-4zM18 0l6 4-6 4-6-4zM0 12l6-4 6 4-6 4zM24 12l-6-4-6 4 6 4zM6 18l6-4 6 4-6 4z" fill="#000"/></svg>
<svg class="r" style="left:1599px;top:1044px" width="24" height="13" viewBox="0 0 24 13"><rect x="0.75" y="0.75" width="20.5" height="11.5" fill="none" stroke="#000" stroke-width="1.5"/><rect x="3" y="3" width="7" height="7" fill="#000"/><rect x="22" y="4" width="2" height="5" fill="#000"/></svg>
<svg class="r" style="left:1638px;top:1042px" width="21" height="19" viewBox="0 0 21 19"><path d="M1 18A17 17 0 0 1 18 1M5 18A13 13 0 0 1 18 5M9 18A9 9 0 0 1 18 9" fill="none" stroke="#000" stroke-width="1.3"/><circle cx="18" cy="17" r="1.8" fill="#000"/></svg>
<svg class="r" style="left:1671px;top:1040px" width="23" height="19" viewBox="0 0 23 19"><path d="M1 6h4l6-5v17l-6-5H1z" fill="none" stroke="#000" stroke-width="1.3"/><path d="M14 6a4 4 0 0 1 0 7M17 3a8 8 0 0 1 0 13M20 1a11 11 0 0 1 0 17" fill="none" stroke="#666" stroke-width="1.2"/></svg>
<svg class="r" style="left:1706px;top:1043px" width="25" height="16" viewBox="0 0 25 16"><path d="M5 16a5 5 0 0 1 0-10 7 7 0 0 1 13-2 6 6 0 0 1 2 12z" fill="#fff"/><path d="M12.5 5l-4 4h2.5v4h3V9h2.5z" fill="#c9d3dc"/></svg>
<div class="t " style="left:1756px;top:1027.76px;font-size:18px;line-height:18px;color:#000;transform:scaleX(0.9398);">7:17 PM</div>
<div class="t " style="left:1747px;top:1055.76px;font-size:18px;line-height:18px;color:#000;">3/29/2021</div>
<svg class="r" style="left:1858px;top:1038px" width="25" height="24" viewBox="0 0 25 24"><path d="M0 0h24v19H8l-2.5 3.5V19H0z" fill="#000"/><path d="M5 5.5h14M5 9h14M5 12.5h14" stroke="#fff" stroke-width="1.2"/></svg>
<svg class="r" style="left:1867px;top:1047px" width="28" height="28" viewBox="0 0 28 28"><circle cx="14" cy="14" r="12.5" fill="rgba(214,214,214,0.88)" stroke="#6a6a6a" stroke-width="1"/></svg>
<div class="t " style="left:1873px;top:1052.76px;font-size:18px;line-height:18px;color:#000;transform:scaleX(0.7742);">15</div>
<div class="r" style="left:1913px;top:1020px;width:1px;height:60px;background:#8c8c8c;"></div>
<div class="r" style="left:49px;top:16px;width:19px;height:27px;box-sizing:border-box;border:1px solid #767676;border-radius:2px;background:linear-gradient(#fff,#e4ebf5);font-size:17.5px;line-height:28px;text-align:center;color:#222;">1</div>
<div class="r" style="left:32px;top:37px;width:19px;height:27px;box-sizing:border-box;border:1px solid #767676;border-radius:2px;background:linear-gradient(#fff,#e4ebf5);font-size:17.5px;line-height:28px;text-align:center;color:#222;">F</div>
<div class="r" style="left:116px;top:61px;width:19px;height:27px;box-sizing:border-box;border:1px solid #767676;border-radius:2px;background:linear-gradient(#fff,#e4ebf5);font-size:17.5px;line-height:28px;text-align:center;color:#222;">H</div>
<div class="r" style="left:198px;top:61px;width:19px;height:27px;box-sizing:border-box;border:1px solid #767676;border-radius:2px;background:linear-gradient(#fff,#e4ebf5);font-size:17.5px;line-height:28px;text-align:center;color:#222;">S</div>
<div class="r" style="left:277px;top:61px;width:19px;height:27px;box-sizing:border-box;border:1px solid #767676;border-radius:2px;background:linear-gradient(#fff,#e4ebf5);font-size:17.5px;line-height:28px;text-align:center;color:#222;">V</div>
<div class="r" style="left:1904px;top:51px;width:19px;height:27px;box-sizing:border-box;border:1px solid #767676;border-radius:2px;background:linear-gradient(#fff,#e4ebf5);font-size:17.5px;line-height:28px;text-align:center;color:#222;">E</div>
</body></html>
